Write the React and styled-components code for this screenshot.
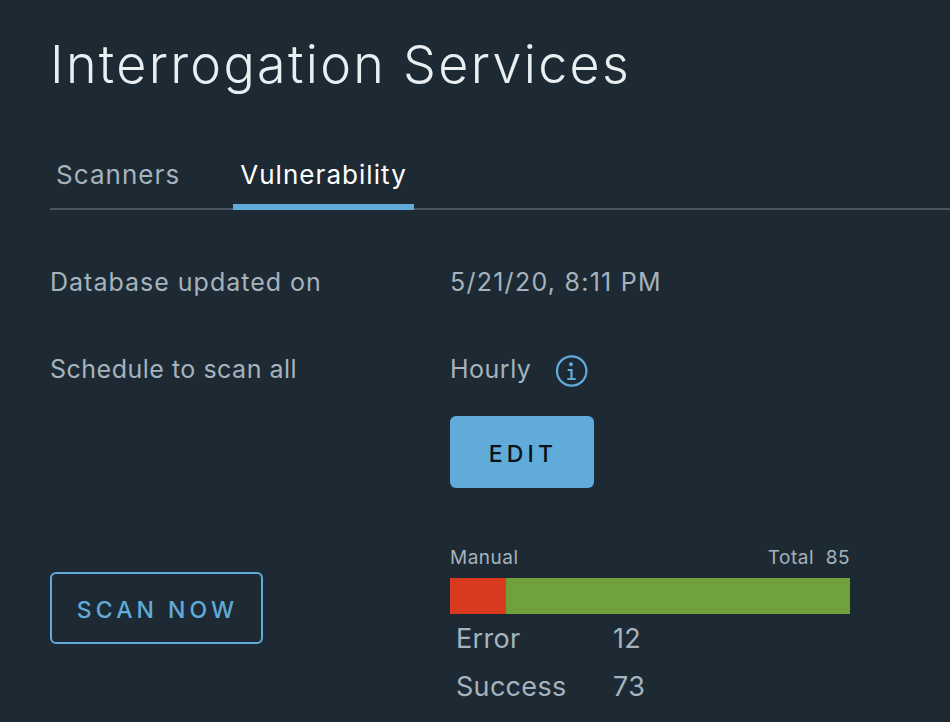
import React from "react";
import styled, { createGlobalStyle } from "styled-components";

const Global = createGlobalStyle`
  html, body { margin: 0; padding: 0; background: #1e2a33; }
  body { font-family: Inter, "Noto Sans", sans-serif; overflow: hidden; }
`;
const Page = styled.div`
  width: 950px; height: 722px; box-sizing: border-box; overflow: hidden;
  padding: 32px 0 0 50px; background: #1e2a33;
`;
const Title = styled.h1`
  margin: 0; font-size: 52px; line-height: 66px; font-weight: 300; color: #e9eef1; letter-spacing: 2.3px;
`;
const Tabs = styled.div`
  display: flex; margin-top: 63px; height: 47px; border-bottom: 2px solid #4a555f;
`;
const Tab = styled.div`
  box-sizing: border-box; height: 49px; padding: 0 7px; margin-left: ${p => p.$first ? "-1px" : "0"}; margin-right: ${p => p.$first ? "46px" : "0"};
  font-size: 26px; line-height: 28px; font-weight: 400; letter-spacing: 1.05px;
  color: ${p => p.$active ? "#ffffff" : "#a4b3bd"};
  border-bottom: 6px solid ${p => p.$active ? "#60abd9" : "transparent"};
`;
const Row = styled.div`
  display: grid; grid-template-columns: 400px 1fr; align-items: start; font-size: 25px; line-height: 32px; color: #a4b3bd;
  letter-spacing: 0.5px; margin-top: ${p => p.$gap}px;
`;
const Spaced = styled.div`letter-spacing: ${p => p.$spacing}px;`;
const Cell = styled.div`display: flex; align-items: flex-start; gap: 25px;`;
const InfoIcon = styled.svg`margin-top: 2px; flex: none;`;
const Stack = styled.div`display: flex; flex-direction: column; align-items: flex-start;`;
const Edit = styled.button`
  width: 144px; height: 72px; margin-top: 29px; padding: 3px 0 0 2px; border: 0; border-radius: 6px; background: #60abd9; color: #0a1114;
  font: 500 23px Inter, sans-serif; letter-spacing: 4.2px;
`;
const Bottom = styled.div`display: grid; grid-template-columns: 400px 400px; margin-top: 59px;`;
const Scan = styled.button`
  box-sizing: border-box; width: 213px; height: 72px; margin-top: 25px; padding: 3px 0 0 2px; border: 2px solid #60abd9; border-radius: 6px; background: transparent; color: #60abd9;
  font: 500 23px Inter, sans-serif; letter-spacing: 4.05px;
`;
const Caption = styled.div`
  display: flex; justify-content: space-between; height: 31px; font-size: 19px; line-height: 22px; letter-spacing: 0.5px; color: #a4b3bd;
`;
const Bar = styled.div`display: flex; height: 36px; background: #70a13a;`;
const Fail = styled.div`background: #d93b20;`;
const Stat = styled.div`
  display: grid; grid-template-columns: 157px 1fr; padding-left: 6px; height: 48px; font-size: 27px; line-height: 48px; letter-spacing: 0.3px; color: #a4b3bd;
`;
const Stats = styled.div`padding-top: 1px;`;
const Info = () => (
  <InfoIcon width="32" height="32" viewBox="0 0 32 32" fill="none" stroke="#60abd9">
    <circle cx="15.7" cy="16" r="14.7" strokeWidth="2.2" />
    <circle cx="15" cy="9.3" r="2" fill="#60abd9" stroke="none" />
    <path d="M11.7 15h3.8v9M11.3 24h8.4" strokeWidth="2.2" />
  </InfoIcon>
);

export default function App() {
  const total = 85, err = 12;
  return (
    <Page>
      <Global />
      <Title>Interrogation Services</Title>
      <Tabs>
        <Tab $first>Scanners</Tab>
        <Tab $active>Vulnerability</Tab>
      </Tabs>
      <Row $gap={56}>
        <Spaced $spacing={1}>Database updated on</Spaced>
        <Spaced $spacing={1.25}>5/21/20, 8:11 PM</Spaced>
      </Row>
      <Row $gap={55}>
        <div>Schedule to scan all</div>
        <Stack>
          <Cell>Hourly <Info /></Cell>
          <Edit>EDIT</Edit>
        </Stack>
      </Row>
      <Bottom>
        <div><Scan>SCAN NOW</Scan></div>
        <div>
          <Caption><span>Manual</span><span>Total&nbsp; 85</span></Caption>
          <Bar><Fail style={{ width: `${(err / total) * 100}%` }} /></Bar>
          <Stats>
            <Stat><span>Error</span><span>12</span></Stat>
            <Stat><span>Success</span><span>73</span></Stat>
          </Stats>
        </div>
      </Bottom>
    </Page>
  );
}
